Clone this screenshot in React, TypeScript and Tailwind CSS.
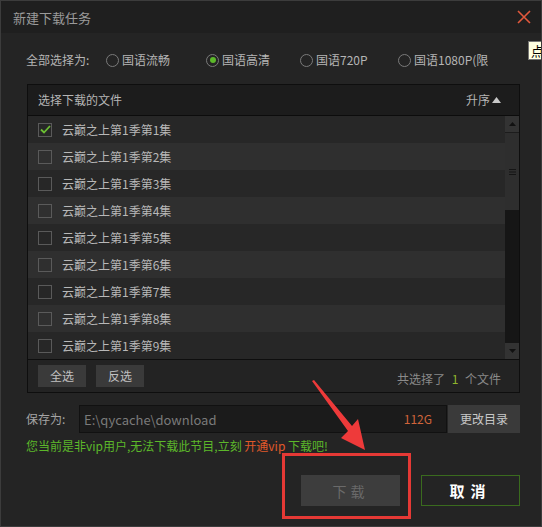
import { FunctionComponent } from "react"

const files = Array.from({ length: 9 }, (_, i) => `云巅之上第1季第${i + 1}集`)

const Radio: FunctionComponent<{ on?: boolean; label: string; w: string }> = ({ on, label, w }) => (
  <div className={`flex items-center ${w}`}>
    <span className="flex h-[13px] w-[13px] items-center justify-center rounded-full border border-[#7a7a7a]">
      {on && <span className="h-[6px] w-[6px] rounded-full bg-[#5cb82a]" />}
    </span>
    <span className="ml-[3px] whitespace-nowrap text-[#b5b5b5]">{label}</span>
  </div>
)

const Check: FunctionComponent<{ on?: boolean }> = ({ on }) => (
  <span className="flex h-[14px] w-[14px] items-center justify-center border border-[#5a5a5a]">
    {on && (
      <svg width="11" height="9" viewBox="0 0 11 9">
        <path d="M1 4.5 L4 7.5 L10 1" stroke="#6cc033" strokeWidth="1.8" fill="none" />
      </svg>
    )}
  </span>
)

export default function App() {
  return (
    <div className="relative h-[527px] w-[542px] overflow-hidden border border-[#3c3c3c] bg-[#242424] text-[12px] leading-none font-['Noto_Sans_CJK_SC',sans-serif]">
      <div className="flex h-[32px] items-center justify-between bg-[#1f1f1f] pl-[12px] pr-[10px]">
        <span className="text-[13px] text-[#9a9a9a]">新建下载任务</span>
        <svg width="14" height="14" viewBox="0 0 14 14">
          <path d="M1 1 L13 13 M13 1 L1 13" stroke="#e2583c" strokeWidth="1.6" />
        </svg>
      </div>

      <div className="mt-[16px] flex h-[22px] items-center pl-[25px]">
        <span className="w-[80px] text-[#b5b5b5]">全部选择为:</span>
        <Radio label="国语流畅" w="w-[100px]" />
        <Radio on label="国语高清" w="w-[94px]" />
        <Radio label="国语720P" w="w-[98px]" />
        <div className="w-[90px] overflow-hidden">
          <Radio label="国语1080P(限免)" w="w-[120px]" />
        </div>
      </div>

      <div className="ml-[26px] mt-[13px] w-[493px] border border-[#0e0e0e]">
        <div className="flex h-[31px] items-center justify-between border-b border-[#0c0c0c] bg-[#1c1c1c] pl-[10px] pr-[18px]">
          <span className="text-[#b5b5b5]">选择下载的文件</span>
          <span className="flex items-center text-[#b5b5b5]">
            升序
            <svg className="ml-[2px]" width="9" height="6" viewBox="0 0 9 6">
              <path d="M0 6 L4.5 0 L9 6 Z" fill="#c8c8c8" />
            </svg>
          </span>
        </div>
        <div className="flex">
          <div className="flex-1">
            {files.map((f, i) => (
              <div
                key={f}
                className={`flex h-[27px] items-center pl-[10px] ${i % 2 === 0 ? "bg-[#272727]" : "bg-[#2f2f2f]"}`}
              >
                <Check on={i === 0} />
                <span className="ml-[10px] text-[#b8b8b8]">{f}</span>
              </div>
            ))}
          </div>
          <div className="flex w-[14px] flex-col bg-[#161616]">
            <div className="flex h-[16px] items-center justify-center bg-[#333]">
              <svg width="7" height="4" viewBox="0 0 7 4"><path d="M0 4 L3.5 0 L7 4 Z" fill="#111" /></svg>
            </div>
            <div className="flex h-[78px] items-center justify-center border-t border-[#1c1c1c] bg-[#2e2e2e]">
              <svg width="7" height="6" viewBox="0 0 7 6">
                <path d="M0 0.5 H7 M0 3 H7 M0 5.5 H7" stroke="#151515" strokeWidth="1" />
              </svg>
            </div>
            <div className="flex-1" />
            <div className="flex h-[16px] items-center justify-center bg-[#333]">
              <svg width="7" height="4" viewBox="0 0 7 4"><path d="M0 0 L3.5 4 L7 0 Z" fill="#111" /></svg>
            </div>
          </div>
        </div>
        <div className="flex h-[33px] items-center justify-between border-t border-[#0e0e0e] bg-[#232323] pl-[10px] pr-[18px]">
          <div className="flex gap-[10px]">
            <button className="h-[22px] w-[48px] bg-[#3a3a3a] text-[#c0c0c0]">全选</button>
            <button className="h-[22px] w-[48px] bg-[#3a3a3a] text-[#c0c0c0]">反选</button>
          </div>
          <span className="pt-[6px] text-[#8a8a8a]">
            共选择了 <span className="mx-[4px] text-[#8fb52c]">1</span> 个文件
          </span>
        </div>
      </div>

      <div className="mt-[12px] flex h-[28px] items-center pl-[25px]">
        <span className="w-[53px] text-[#a5a5a5]">保存为:</span>
        <div className="flex h-full w-[368px] items-center justify-between bg-[#1b1b1b] pl-[4px] pr-[14px] border border-[#111]">
          <span className="text-[13px] text-[#7a7a7a]">E:\qycache\download</span>
          <span className="text-[#d0643a]">112G</span>
        </div>
        <button className="ml-[1px] h-full w-[72px] bg-[#3a3a3a] text-[#c8c8c8]">更改目录</button>
      </div>

      <div className="mt-[7px] h-[14px] pl-[25px] text-[#5cb82a]">
        您当前是非vip用户,无法下载此节目,立刻 <span className="text-[#e0592a]">开通vip</span> 下载吧!
      </div>

      <div className="mt-[21px] flex justify-end gap-[21px] pr-[21px]">
        <button className="h-[31px] w-[99px] bg-[#3d3d3d] text-[14px] tracking-[4px] text-[#6a6a6a]">下载</button>
        <button className="h-[31px] w-[99px] border border-[#3a6b1e] text-[15px] font-bold tracking-[6px] text-white">取消</button>
      </div>

      <div className="absolute left-[281px] top-[452px] h-[66px] w-[129px] border-[3px] border-[#e53935]" />

      <svg className="absolute left-0 top-0" width="542" height="527" viewBox="0 0 542 527">
        <path d="M311 380 L313 379 L351 425 L357 418 L364 449 L340 437 L347 430 Z" fill="#ee3a3a" />
      </svg>

      <div className="absolute left-[527px] top-[40px] flex h-[19px] w-[20px] items-center border border-[#767676] bg-[#ffffe1] pl-[2px] text-[13px] text-black">
        点
      </div>
    </div>
  )
}
